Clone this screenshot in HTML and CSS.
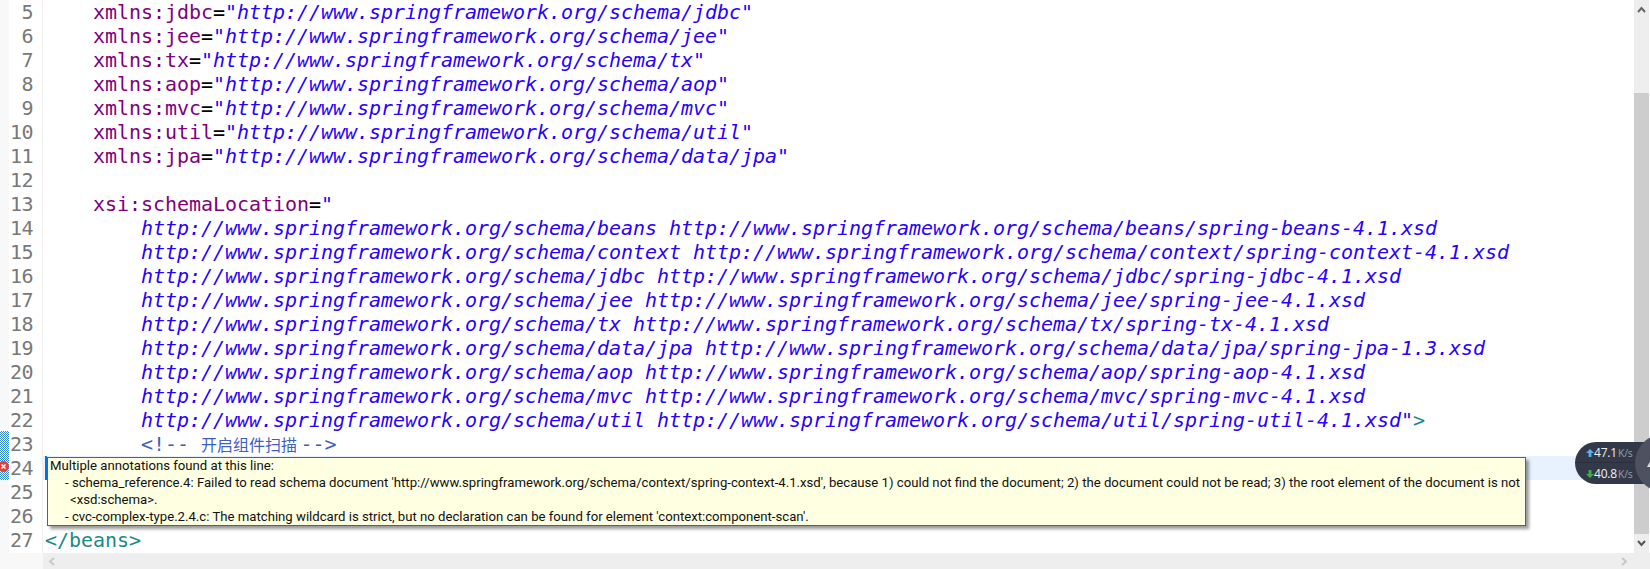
FILE: index.html
```html
<!DOCTYPE html>
<html lang="en">
<head>
<meta charset="utf-8">
<title>applicationContext.xml</title>
<link rel="stylesheet" href="styles.css">
</head>
<body>
<div class="window">
  <div class="main">
    <div class="ruler">
      <div class="mark"></div>
    </div>
    <div class="gutter">
      <div class="num">5</div><div class="num">6</div><div class="num">7</div><div class="num">8</div><div class="num">9</div><div class="num">10</div><div class="num">11</div><div class="num">12</div><div class="num">13</div><div class="num">14</div><div class="num">15</div><div class="num">16</div><div class="num">17</div><div class="num">18</div><div class="num">19</div><div class="num">20</div><div class="num">21</div><div class="num">22</div><div class="num">23</div><div class="num">24</div><div class="num">25</div><div class="num">26</div><div class="num">27</div>
    </div>
    <div class="code">
<div class="line"><span class="in1"></span><span class="attr">xmlns:jdbc</span><span class="eq">=</span><span class="val">"http://www.springframework.org/schema/jdbc"</span></div>
<div class="line"><span class="in1"></span><span class="attr">xmlns:jee</span><span class="eq">=</span><span class="val">"http://www.springframework.org/schema/jee"</span></div>
<div class="line"><span class="in1"></span><span class="attr">xmlns:tx</span><span class="eq">=</span><span class="val">"http://www.springframework.org/schema/tx"</span></div>
<div class="line"><span class="in1"></span><span class="attr">xmlns:aop</span><span class="eq">=</span><span class="val">"http://www.springframework.org/schema/aop"</span></div>
<div class="line"><span class="in1"></span><span class="attr">xmlns:mvc</span><span class="eq">=</span><span class="val">"http://www.springframework.org/schema/mvc"</span></div>
<div class="line"><span class="in1"></span><span class="attr">xmlns:util</span><span class="eq">=</span><span class="val">"http://www.springframework.org/schema/util"</span></div>
<div class="line"><span class="in1"></span><span class="attr">xmlns:jpa</span><span class="eq">=</span><span class="val">"http://www.springframework.org/schema/data/jpa"</span></div>
<div class="line"></div>
<div class="line"><span class="in1"></span><span class="attr">xsi:schemaLocation</span><span class="eq">=</span><span class="val">"</span></div>
<div class="line"><span class="in2"></span><span class="val">http://www.springframework.org/schema/beans http://www.springframework.org/schema/beans/spring-beans-4.1.xsd</span></div>
<div class="line"><span class="in2"></span><span class="val">http://www.springframework.org/schema/context http://www.springframework.org/schema/context/spring-context-4.1.xsd</span></div>
<div class="line"><span class="in2"></span><span class="val">http://www.springframework.org/schema/jdbc http://www.springframework.org/schema/jdbc/spring-jdbc-4.1.xsd</span></div>
<div class="line"><span class="in2"></span><span class="val">http://www.springframework.org/schema/jee http://www.springframework.org/schema/jee/spring-jee-4.1.xsd</span></div>
<div class="line"><span class="in2"></span><span class="val">http://www.springframework.org/schema/tx http://www.springframework.org/schema/tx/spring-tx-4.1.xsd</span></div>
<div class="line"><span class="in2"></span><span class="val">http://www.springframework.org/schema/data/jpa http://www.springframework.org/schema/data/jpa/spring-jpa-1.3.xsd</span></div>
<div class="line"><span class="in2"></span><span class="val">http://www.springframework.org/schema/aop http://www.springframework.org/schema/aop/spring-aop-4.1.xsd</span></div>
<div class="line"><span class="in2"></span><span class="val">http://www.springframework.org/schema/mvc http://www.springframework.org/schema/mvc/spring-mvc-4.1.xsd</span></div>
<div class="line"><span class="in2"></span><span class="val">http://www.springframework.org/schema/util http://www.springframework.org/schema/util/spring-util-4.1.xsd"</span><span class="tag">&gt;</span></div>
<div class="line"><span class="in2"></span><span class="com">&lt;!-- <span class="cjk">开启组件扫描 </span>--&gt;</span></div>
<div class="line current"></div>
<div class="line"></div>
<div class="line"></div>
<div class="line"><span class="tag">&lt;/beans&gt;</span></div>
    </div>
    <div class="vbar">
      <svg class="arrow" width="9" height="7" viewBox="0 0 9 7"><path d="M1 6 L4.5 2 L8 6" fill="none" stroke="#666" stroke-width="2"/></svg>
      <div class="track"><div class="thumb"></div></div>
      <svg class="arrow" width="9" height="7" viewBox="0 0 9 7"><path d="M1 1 L4.5 5 L8 1" fill="none" stroke="#555" stroke-width="2"/></svg>
    </div>
  </div>
  <div class="hrow">
    <div class="hcorner"></div>
    <div class="hbar">
      <svg width="7" height="9" viewBox="0 0 7 9"><path d="M6 1 L2 4.5 L6 8" fill="none" stroke="#c8c8c8" stroke-width="2"/></svg>
      <svg width="7" height="9" viewBox="0 0 7 9"><path d="M1 1 L5 4.5 L1 8" fill="none" stroke="#c8c8c8" stroke-width="2"/></svg>
    </div>
  </div>

  <div class="errmark"><svg width="7" height="7" viewBox="0 0 7 7"><path d="M1.5 1.5 L5.5 5.5 M5.5 1.5 L1.5 5.5" fill="none" stroke="#fff" stroke-width="1.5"/></svg></div>
  <div class="caret"></div>

  <div class="tip">
    <div class="tl">Multiple annotations found at this line:</div>
    <div class="tl item">- schema_reference.4: Failed to read schema document 'http://www.springframework.org/schema/context/spring-context-4.1.xsd', because 1) could not find the document; 2) the document could not be read; 3) the root element of the document is not</div>
    <div class="tl cont">&lt;xsd:schema&gt;.</div>
    <div class="tl item">- cvc-complex-type.2.4.c: The matching wildcard is strict, but no declaration can be found for element 'context:component-scan'.</div>
  </div>

  <div class="speed">
    <div class="row"><svg width="8" height="8" viewBox="0 0 8 8"><path d="M4 0 L8 4 H5.4 V8 H2.6 V4 H0 Z" fill="#5ab0e8"/></svg><b>47.1</b><i>K/s</i></div>
    <div class="row split"><svg width="8" height="8" viewBox="0 0 8 8"><path d="M4 8 L8 4 H5.4 V0 H2.6 V4 H0 Z" fill="#3fae4a"/></svg><b>40.8</b><i>K/s</i></div>
  </div>
  <div class="ball"><svg class="ballmark" width="8" height="7" viewBox="0 0 8 7"><path d="M0 7 L4 0 H8 V7 Z" fill="#dfe1e6"/></svg></div>
</div>
</body>
</html>
```
FILE: styles.css
```css
* { box-sizing: border-box; }
html, body { margin: 0; height: 100%; background: #fff; overflow: hidden; }
.window {
  position: relative;
  width: 1650px;
  height: 569px;
  display: flex;
  flex-direction: column;
  overflow: hidden;
  font-family: "DejaVu Sans Mono", monospace;
}
.main { display: flex; height: 553px; }
.ruler {
  width: 9px;
  background: #f8f8f8;
  position: relative;
  flex: none;
}
.mark {
  position: absolute;
  left: 0;
  top: 431px;
  width: 9px;
  height: 49px;
  background-color: #fff;
  background-image: conic-gradient(#2f86d8 25%, #fff 0 50%, #2f86d8 0 75%, #fff 0);
  background-size: 2px 2px;
}
.gutter {
  width: 34px;
  flex: none;
  border-right: 1px solid #f0f0f0;
  padding-right: 9px;
  background: #fff;
}
.num {
  height: 24px;
  line-height: 24px;
  font-size: 20px;
  letter-spacing: -0.5px;
  text-align: right;
  color: #787878;
  white-space: nowrap;
}
.code {
  flex: 1;
  min-width: 0;
  padding-left: 2px;
  font-size: 20px;
  letter-spacing: -0.04px;
}
.line { height: 24px; line-height: 24px; white-space: pre; }
.current { background: #e8f2fe; margin-left: -2px; }
.in1 { display: inline-block; width: 48px; }
.in2 { display: inline-block; width: 96px; }
.attr { color: #7f007f; }
.eq { color: #000; }
.val { color: #2a00ff; font-style: italic; }
.tag { color: #1a8a8a; }
.com { color: #3f5fbf; }
.cjk { font-family: "Noto Sans CJK SC", sans-serif; font-size: 16px; letter-spacing: 0; }
.vbar {
  width: 15px;
  flex: none;
  background: #eee;
  display: flex;
  flex-direction: column;
  align-items: center;
  margin-right: 1px;
}
.arrow { flex: none; margin: 6px 0; }
.track { flex: 1; width: 100%; display: flex; flex-direction: column; justify-content: flex-end; }
.thumb { height: 441px; background: #cdcdcd; }
.hrow { display: flex; height: 16px; }
.hcorner { width: 43px; background: #f8f8f8; flex: none; }
.hbar {
  flex: 1;
  background: #eee;
  display: flex;
  justify-content: space-between;
  align-items: center;
  padding: 0 22px 0 5px;
}
.errmark {
  position: absolute;
  left: -2px;
  top: 461px;
  width: 11px;
  height: 11px;
  border-radius: 50%;
  background: #d9443f;
  display: flex;
  align-items: center;
  justify-content: center;
}
.caret {
  position: absolute;
  left: 45px;
  top: 456px;
  width: 2px;
  height: 24px;
  background: #0078d7;
}
.tip {
  position: absolute;
  left: 47px;
  top: 457px;
  width: 1479px;
  height: 69px;
  background: #ffffe1;
  border: 1px solid #5f5f5f;
  box-shadow: 3px 3px 3px rgba(0,0,0,.4);
  padding: 0 0 0 2px;
  font: 13.17px/15px "Roboto", sans-serif;
  color: #111;
}
.tl { white-space: pre; height: 17px; }
.item { padding-left: 15px; }
.cont { padding-left: 20px; }
.speed {
  position: absolute;
  left: 1575px;
  top: 442px;
  width: 75px;
  height: 42px;
  border-radius: 21px 0 0 21px;
  background: #34394a;
  padding: 0 0 0 11px;
  font: 12px/20px "Open Sans", sans-serif;
  letter-spacing: -0.2px;
}
.row { height: 21px; display: flex; align-items: center; }
.split { box-shadow: 0 -1px 0 #2b2f3d; margin-left: -11px; padding-left: 11px; }
.row b { font-weight: 400; color: #eef0f4; margin-right: 1px; }
.row i { font-style: normal; color: #9a9da6; font-size: 10.5px; }
.ball {
  position: absolute;
  left: 1635px;
  top: 434px;
  width: 58px;
  height: 58px;
  border-radius: 50%;
  background: #4e5260;
  display: flex;
  align-items: center;
}
.ballmark { margin-left: 12px; }
```
